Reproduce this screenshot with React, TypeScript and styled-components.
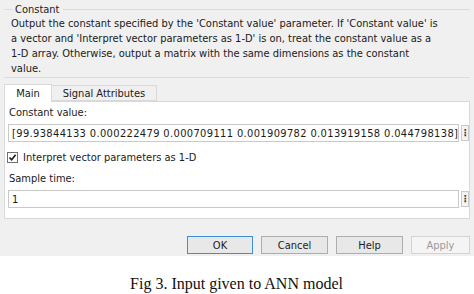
import React from "react";
import styled, { createGlobalStyle } from "styled-components";

const Global = createGlobalStyle`
  html, body { margin: 0; padding: 0; background: #ffffff; }
  body { width: 474px; height: 294px; overflow: hidden; }
`;

const ui = `"DejaVu Sans Condensed", "DejaVu Sans", sans-serif`;

const Page = styled.div`
  width: 474px;
  display: flex;
  flex-direction: column;
`;

const Dialog = styled.div`
  background: #f0f0f0;
  height: 256px;
  box-sizing: border-box;
  padding: 3px 4px 0 4px;
  display: flex;
  flex-direction: column;
  font-family: ${ui};
  font-size: 11px;
  color: #1b1b1b;
`;

const GroupBox = styled.fieldset`
  margin: 0;
  padding: 0 4px 5px 7px;
  border: 1px solid #dcdcdc;
  border-left: none;
  border-right: none;
  min-height: 0;
  height: 75px;
  box-sizing: border-box;
`;

const Legend = styled.legend`
  padding: 0 3px;
  margin-left: 1px;
  font-size: 11px;
  line-height: 13px;
  color: #222;
`;

const Description = styled.p`
  margin: 0;
  line-height: 15px;
  font-size: 11px;
  color: #1a1a1a;
  white-space: nowrap;
`;

const TabBar = styled.div`
  display: flex;
  align-items: flex-end;
  margin-top: 6px;
  height: 17px;
  position: relative;
  z-index: 1;
`;

const Tab = styled.div<{ $active?: boolean; $w: number }>`
  box-sizing: border-box;
  width: ${(p) => p.$w}px;
  height: ${(p) => (p.$active ? 18 : 16)}px;
  display: flex;
  align-items: center;
  justify-content: center;
  background: ${(p) => (p.$active ? "#ffffff" : "#f0f0f0")};
  border: 1px solid #d9d9d9;
  border-bottom: ${(p) => (p.$active ? "none" : "1px solid #d9d9d9")};
  margin-bottom: ${(p) => (p.$active ? -1 : 0)}px;
  margin-left: ${(p) => (p.$active ? 0 : -1)}px;
  font-size: 11px;
  color: #1b1b1b;
`;

const Panel = styled.div`
  background: #ffffff;
  border: 1px solid #d9d9d9;
  height: 118px;
  box-sizing: border-box;
  padding: 3px 0 0 3px;
  display: flex;
  flex-direction: column;
`;

const Label = styled.div`
  height: 16px;
  line-height: 16px;
  padding-left: 1px;
  color: #1b1b1b;
`;

const FieldRow = styled.div`
  display: flex;
  align-items: center;
  gap: 2px;
  margin-top: 3px;
`;

const Field = styled.div`
  width: 452px;
  height: 18px;
  box-sizing: border-box;
  border: 1px solid #c9c9c9;
  background: #fff;
  padding-left: 3px;
  display: flex;
  align-items: center;
  white-space: nowrap;
  overflow: hidden;
  color: #1b1b1b;
  letter-spacing: 0.36px;
`;

const MoreButton = styled.div`
  width: 8px;
  height: 16px;
  box-sizing: border-box;
  border: 1px solid #c9c9c9;
  background: #f4f4f4;
  display: flex;
  align-items: center;
  justify-content: center;
  font-size: 10px;
  line-height: 1;
  color: #333;
  font-weight: bold;
`;

const CheckRow = styled.label`
  display: flex;
  align-items: center;
  gap: 5px;
  margin-top: 8px;
  height: 14px;
`;

const Box = styled.span`
  width: 11px;
  height: 11px;
  box-sizing: border-box;
  border: 1px solid #707070;
  background: #fff;
  display: flex;
  align-items: center;
  justify-content: center;
  margin-left: -1px;
`;

const SampleLabel = styled(Label)`
  margin-top: 7px;
`;

const Buttons = styled.div`
  display: flex;
  justify-content: flex-end;
  gap: 8px;
  margin-top: 17px;
`;

const Btn = styled.div<{ $default?: boolean; $disabled?: boolean; $w: number }>`
  width: ${(p) => p.$w}px;
  height: 18px;
  box-sizing: border-box;
  border: 1px solid ${(p) => (p.$default ? "#3c8fd6" : p.$disabled ? "#d3d3d3" : "#adadad")};
  background: ${(p) => (p.$disabled ? "#f4f4f4" : "#e8e8e8")};
  color: ${(p) => (p.$disabled ? "#9a9a9a" : "#1b1b1b")};
  display: flex;
  align-items: center;
  justify-content: center;
  font-size: 11px;
`;

const Caption = styled.div`
  font-family: "Liberation Serif", "Times New Roman", serif;
  font-size: 16px;
  color: #111;
  text-align: center;
  padding-top: 19px;
  padding-right: 1px;
`;

export default function App() {
  return (
    <Page>
      <Global />
      <Dialog>
        <GroupBox>
          <Legend>Constant</Legend>
          <Description>
            Output the constant specified by the 'Constant value' parameter. If 'Constant value' is
            <br />
            a vector and 'Interpret vector parameters as 1-D' is on, treat the constant value as a
            <br />
            1-D array. Otherwise, output a matrix with the same dimensions as the constant
            <br />
            value.
          </Description>
        </GroupBox>
        <TabBar>
          <Tab $active $w={48}>Main</Tab>
          <Tab $w={106}>Signal Attributes</Tab>
        </TabBar>
        <Panel>
          <Label>Constant value:</Label>
          <FieldRow>
            <Field>[99.93844133 0.000222479 0.000709111 0.001909782 0.013919158 0.044798138]</Field>
            <MoreButton>⋮</MoreButton>
          </FieldRow>
          <CheckRow>
            <Box>
              <svg width="9" height="9" viewBox="0 0 9 9">
                <path d="M1.5 4.5 L3.6 6.8 L7.6 1.8" fill="none" stroke="#1b1b1b" strokeWidth="1.6" />
              </svg>
            </Box>
            Interpret vector parameters as 1-D
          </CheckRow>
          <SampleLabel>Sample time:</SampleLabel>
          <FieldRow>
            <Field>1</Field>
            <MoreButton>⋮</MoreButton>
          </FieldRow>
        </Panel>
        <Buttons>
          <Btn $w={66} $default>OK</Btn>
          <Btn $w={67}>Cancel</Btn>
          <Btn $w={67}>Help</Btn>
          <Btn $w={59} $disabled>Apply</Btn>
        </Buttons>
      </Dialog>
      <Caption>Fig 3. Input given to ANN model</Caption>
    </Page>
  );
}
